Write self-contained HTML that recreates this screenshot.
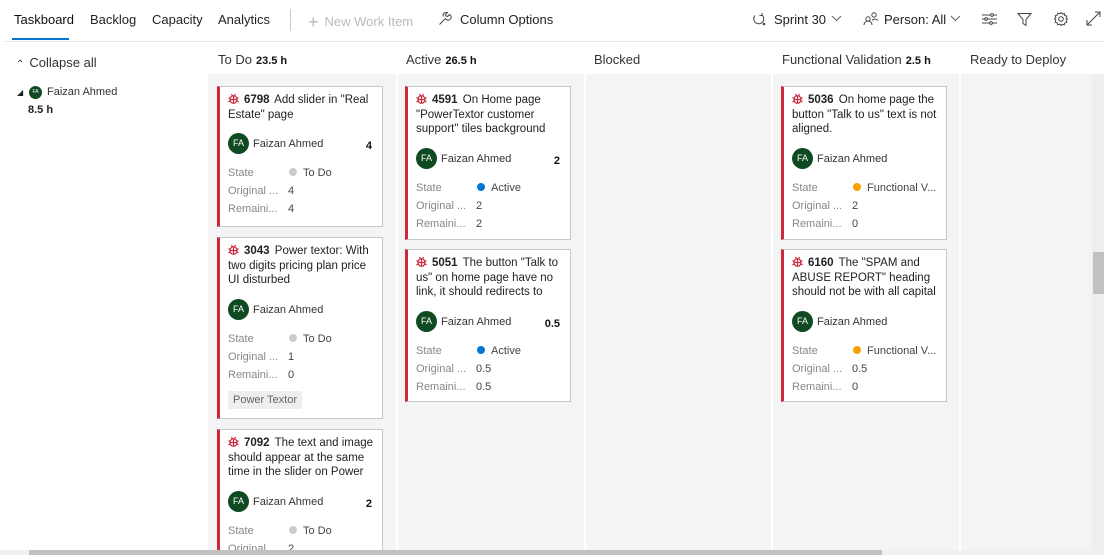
<!DOCTYPE html>
<html style="overflow:hidden"><head><meta charset="utf-8"><style>
*{box-sizing:border-box;margin:0;padding:0}
html,body{overflow:hidden}
body{width:1104px;height:555px;background:#fff;font-family:"Liberation Sans",sans-serif;font-size:12px;color:#222;position:relative}
.a{position:absolute;white-space:nowrap}
.nav{font-size:13px;top:12px}
.col{position:absolute;top:74px;height:476px;background:#f4f4f4}
.ch{position:absolute;top:52px;font-size:13px;color:#333}
.ch b{font-size:11px;margin-left:4px;color:#111}
.card{position:absolute;width:166px;background:#fff;border:1px solid #c8c8c8;border-left:3px solid #cc293d;padding:6px 6px 0 8px;overflow:hidden}
.t{line-height:14.5px;font-size:11.5px;color:#222}
.t b{font-size:11.5px;margin-right:2px}
.bug{display:inline-block;width:11px;height:11px;vertical-align:-1px;margin-right:5px}
.who{height:22px;margin-top:11px;position:relative;line-height:22px;font-size:11px;color:#333}
.av{display:inline-block;width:21px;height:21px;border-radius:50%;background:#0f4a23;color:#fff;font-size:9px;text-align:center;line-height:21px;margin-right:4px;vertical-align:top}
.hrs{position:absolute;right:4px;top:2px;font-weight:bold;font-size:11px;color:#111}
.fl{margin-top:9px}
.f{height:18px;line-height:18px;font-size:11px;color:#444}
.k{display:inline-block;width:60px;color:#888}
.dot{display:inline-block;width:8px;height:8px;border-radius:50%;margin:0 6px 0 1px;vertical-align:-0px}
.tag{display:inline-block;background:#eee;color:#666;font-size:11px;padding:3px 5px;margin-top:7px}
</style></head><body>
<div class="a nav" style="left:14px;color:#111">Taskboard</div>
<div style="position:absolute;left:12px;top:38px;width:57px;height:2px;background:#0078d4"></div>
<div class="a nav" style="left:90px">Backlog</div>
<div class="a nav" style="left:152px">Capacity</div>
<div class="a nav" style="left:218px">Analytics</div>
<div style="position:absolute;left:290px;top:9px;width:1px;height:22px;background:#ccc"></div>
<div class="a nav" style="left:308px;color:#bbb"><span style="font-size:18px;vertical-align:-2px;margin-right:6px">+</span>New Work Item</div>
<svg class="a" style="left:438px;top:12px" width="14" height="14" viewBox="0 0 14 14" fill="none" stroke="#444" stroke-width="1"><path d="M1.5 12.5l6-6M7.5 6.5a3 3 0 1 0 4-4l-2 2-1.5-.5-.5-1.5 2-2a3 3 0 0 0-4 4"/></svg>
<div class="a nav" style="left:460px">Column Options</div>
<svg class="a" style="left:752px;top:12px" width="14" height="14" viewBox="0 0 14 14" fill="none" stroke="#444"><path d="M3 3.5A5 5 0 1 0 10 3M10 1v2.5H7.5"/><circle cx="12" cy="12" r="0.8" fill="#444"/></svg>
<div class="a nav" style="left:774px">Sprint 30</div>
<svg class="a" style="left:831px;top:15px" width="11" height="7" fill="none" stroke="#666"><path d="M1 1l4.5 4.5L10 1"/></svg>
<svg class="a" style="left:863px;top:11px" width="16" height="15" fill="none" stroke="#444"><circle cx="5" cy="8" r="2.2"/><path d="M1 14a4 4 0 0 1 8 0"/><circle cx="11" cy="4" r="2.2"/><path d="M9 9.5a4 4 0 0 1 6 0"/></svg>
<div class="a nav" style="left:884px">Person: All</div>
<svg class="a" style="left:950px;top:15px" width="11" height="7" fill="none" stroke="#666"><path d="M1 1l4.5 4.5L10 1"/></svg>
<svg class="a" style="left:982px;top:12px" width="15" height="14" fill="none" stroke="#444"><path d="M0 3h15M0 7h15M0 11h15"/><circle cx="10" cy="3" r="1.4" fill="#fff"/><circle cx="4" cy="7" r="1.4" fill="#fff"/><circle cx="9" cy="11" r="1.4" fill="#fff"/></svg>
<svg class="a" style="left:1017px;top:12px" width="15" height="15" fill="none" stroke="#444"><path d="M1 1.5h13L9 7.5v6l-3-2v-4z"/></svg>
<svg class="a" style="left:1053px;top:11px" width="16" height="16" viewBox="0 0 16 16" fill="none" stroke="#444"><circle cx="8" cy="8" r="2.3"/><path d="M8 1.5l1.3 1.6 2-.6.5 2 2 .6-.6 2L14.5 8l-1.3 1.3.6 2-2 .6-.6 2-2-.6L8 14.5l-1.3-1.3-2 .6-.6-2-2-.6.6-2L1.5 8l1.3-1.3-.6-2 2-.6.6-2 2 .6z"/></svg>
<svg class="a" style="left:1086px;top:11px" width="15" height="15" fill="none" stroke="#444"><path d="M1 14L14 1M1 9v5h5M9 1h5v5"/></svg>
<div style="position:absolute;left:5px;top:41px;width:1099px;height:1px;background:#e6e6e6"></div>

<div class="a" style="left:16px;top:55px;font-size:13px;color:#333"><span style="font-size:10px;margin-right:5px">&#x2303;</span>Collapse all</div>
<div class="a" style="left:17px;top:88px;font-size:8px">&#9698;</div>
<div class="a" style="left:29px;top:86px;width:13px;height:13px;border-radius:50%;background:#0f4a23;color:#fff;font-size:5px;text-align:center;line-height:13px">FA</div>
<div class="a" style="left:47px;top:86px;font-size:11px;color:#333">Faizan Ahmed</div>
<div class="a" style="left:28px;top:104px;font-size:11px;font-weight:bold">8.5 h</div>

<div class="ch" style="left:218px">To Do<b>23.5 h</b></div>
<div class="ch" style="left:406px">Active<b>26.5 h</b></div>
<div class="ch" style="left:594px">Blocked</div>
<div class="ch" style="left:782px">Functional Validation<b>2.5 h</b></div>
<div class="ch" style="left:970px">Ready to Deploy</div>

<div class="col" style="left:208px;width:188px"></div>
<div class="col" style="left:398px;width:186px"></div>
<div class="col" style="left:586px;width:185px"></div>
<div class="col" style="left:773px;width:186px"></div>
<div class="col" style="left:961px;width:131px"></div>
<div style="position:absolute;left:1092px;top:74px;width:12px;height:476px;background:#efefef"></div>
<div style="position:absolute;left:1093px;top:252px;width:11px;height:42px;background:#c1c1c1"></div>

<svg width="0" height="0" style="position:absolute"><defs><symbol id="bug" viewBox="0 0 11 11"><g fill="none" stroke="#cc293d" stroke-width="1.2"><ellipse cx="5.5" cy="6.5" rx="3.5" ry="3.8"/><path d="M2 6.5h7M5.5 3v7.5M3.5 1l1 2M7.5 1l-1 2M0.5 4.5l1.5 1M10.5 4.5l-1.5 1M0.5 9l1.5-1M10.5 9l-1.5-1"/></g></symbol></defs></svg>

<!-- To Do -->
<div class="card" style="left:217px;top:86px;height:141px">
<div class="t"><svg class="bug"><use href="#bug"/></svg><b>6798</b> Add slider in "Real Estate" page</div>
<div class="who"><span class="av">FA</span>Faizan Ahmed<span class="hrs">4</span></div>
<div class="fl"><div class="f"><span class="k">State</span><i class="dot" style="background:#ccc"></i>To Do</div><div class="f"><span class="k">Original ...</span>4</div><div class="f"><span class="k">Remaini...</span>4</div></div>
</div>
<div class="card" style="left:217px;top:237px;height:182px">
<div class="t"><svg class="bug"><use href="#bug"/></svg><b>3043</b> Power textor: With two digits pricing plan price UI disturbed</div>
<div class="who"><span class="av">FA</span>Faizan Ahmed</div>
<div class="fl"><div class="f"><span class="k">State</span><i class="dot" style="background:#ccc"></i>To Do</div><div class="f"><span class="k">Original ...</span>1</div><div class="f"><span class="k">Remaini...</span>0</div></div>
<div class="tag">Power Textor</div>
</div>
<div class="card" style="left:217px;top:429px;height:126px;border-bottom:none">
<div class="t"><svg class="bug"><use href="#bug"/></svg><b>7092</b> The text and image should appear at the same time in the slider on Power</div>
<div class="who"><span class="av">FA</span>Faizan Ahmed<span class="hrs">2</span></div>
<div class="fl"><div class="f"><span class="k">State</span><i class="dot" style="background:#ccc"></i>To Do</div><div class="f"><span class="k">Original ...</span>2</div></div>
</div>

<!-- Active -->
<div class="card" style="left:405px;top:86px;height:154px">
<div class="t"><svg class="bug"><use href="#bug"/></svg><b>4591</b> On Home page "PowerTextor customer support" tiles background</div>
<div class="who"><span class="av">FA</span>Faizan Ahmed<span class="hrs">2</span></div>
<div class="fl"><div class="f"><span class="k">State</span><i class="dot" style="background:#0078d4"></i>Active</div><div class="f"><span class="k">Original ...</span>2</div><div class="f"><span class="k">Remaini...</span>2</div></div>
</div>
<div class="card" style="left:405px;top:249px;height:153px">
<div class="t"><svg class="bug"><use href="#bug"/></svg><b>5051</b> The button "Talk to us" on home page have no link, it should redirects to</div>
<div class="who"><span class="av">FA</span>Faizan Ahmed<span class="hrs">0.5</span></div>
<div class="fl"><div class="f"><span class="k">State</span><i class="dot" style="background:#0078d4"></i>Active</div><div class="f"><span class="k">Original ...</span>0.5</div><div class="f"><span class="k">Remaini...</span>0.5</div></div>
</div>

<!-- FV -->
<div class="card" style="left:781px;top:86px;height:154px">
<div class="t"><svg class="bug"><use href="#bug"/></svg><b>5036</b> On home page the button "Talk to us" text is not aligned.</div>
<div class="who"><span class="av">FA</span>Faizan Ahmed</div>
<div class="fl"><div class="f"><span class="k">State</span><i class="dot" style="background:#f7a100"></i>Functional V...</div><div class="f"><span class="k">Original ...</span>2</div><div class="f"><span class="k">Remaini...</span>0</div></div>
</div>
<div class="card" style="left:781px;top:249px;height:153px">
<div class="t"><svg class="bug"><use href="#bug"/></svg><b>6160</b> The "SPAM and ABUSE REPORT" heading should not be with all capital</div>
<div class="who"><span class="av">FA</span>Faizan Ahmed</div>
<div class="fl"><div class="f"><span class="k">State</span><i class="dot" style="background:#f7a100"></i>Functional V...</div><div class="f"><span class="k">Original ...</span>0.5</div><div class="f"><span class="k">Remaini...</span>0</div></div>
</div>
<div style="position:absolute;left:0;top:550px;width:1104px;height:5px;background:#f0f0f0"></div>
<div style="position:absolute;left:29px;top:550px;width:853px;height:5px;background:#c1c1c1"></div>
</body></html>
